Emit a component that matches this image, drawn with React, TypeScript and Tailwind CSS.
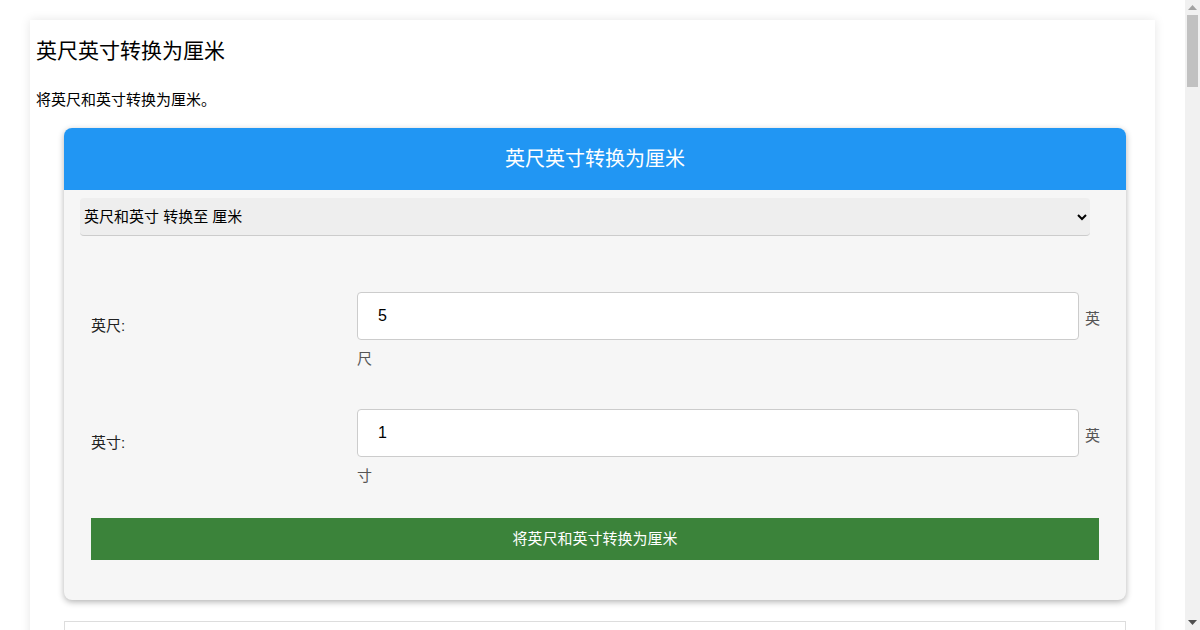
const font = { fontFamily: '"Liberation Sans", "Noto Sans CJK SC", sans-serif' };

function Row({ label, value, unit }: { label: string; value: string; unit: string }) {
  return (
    <div className="flex">
      <label className="w-[266px] shrink-0 pt-[24px] text-[15px] leading-5 text-[#222]">{label}</label>
      <div className="w-[746px] shrink-0 text-[15px] leading-5 text-[#555]">
        <input
          type="text"
          defaultValue={value}
          className="mb-[9px] inline-block h-12 w-[722px] rounded border border-[#ccc] bg-white px-5 align-middle text-base text-black outline-none"
        />
        <span className="ml-[6px]">{unit}</span>
      </div>
    </div>
  );
}

function Scrollbar() {
  return (
    <div className="fixed top-0 right-0 flex h-full w-[15px] flex-col items-center bg-[#f1f1f1]">
      <svg width="9" height="5" viewBox="0 0 9 5" className="mt-[5px]">
        <path d="M0 5 L4.5 0 L9 5 Z" fill="#a3a3a3" />
      </svg>
      <div className="mt-[5px] h-[72px] w-[11px] bg-[#c1c1c1]" />
      <div className="flex-1" />
      <svg width="9" height="5" viewBox="0 0 9 5" className="mb-[5px]">
        <path d="M0 0 L4.5 5 L9 0 Z" fill="#505050" />
      </svg>
    </div>
  );
}

export default function App() {
  return (
    <div className="min-h-[900px] bg-white pt-5" style={font}>
      <div className="ml-[30px] mr-[45px] min-h-[880px] bg-white px-[6px] pt-[17px] shadow-[0_0_10px_rgba(0,0,0,0.1)]">
        <h1 className="text-[21px] leading-7 text-black">英尺英寸转换为厘米</h1>
        <p className="mt-[25px] text-[15px] leading-5 text-black">将英尺和英寸转换为厘米。</p>

        <div className="mt-[18px] ml-[28px] w-[1062px] overflow-hidden rounded-lg bg-[#f6f6f6] pb-10 shadow-[0_2px_6px_rgba(0,0,0,0.3)]">
          <div className="flex h-[62px] items-center justify-center bg-[#2196f3] text-xl text-white">
            英尺英寸转换为厘米
          </div>
          <select
            className="mt-2 ml-4 h-[38px] w-[1010px] rounded border-0 border-b border-[#ccc] bg-[#eee] px-0 text-[15px] text-black outline-none"
            style={font}
            defaultValue="ftin-cm"
          >
            <option value="ftin-cm">英尺和英寸 转换至 厘米</option>
            <option value="cm-ftin">厘米 转换至 英尺和英寸</option>
          </select>

          <div className="mx-auto mt-14 w-[1008px]">
            <Row label="英尺:" value="5" unit="英尺" />
            <div className="mt-10">
              <Row label="英寸:" value="1" unit="英寸" />
            </div>
            <button className="mt-8 h-[42px] w-[1008px] bg-[#3b833a] text-[15px] text-white">
              将英尺和英寸转换为厘米
            </button>
          </div>
        </div>

        <div className="mt-[21px] ml-[28px] h-[240px] w-[1062px] border border-[#ddd] bg-white" />
      </div>
      <Scrollbar />
    </div>
  );
}
